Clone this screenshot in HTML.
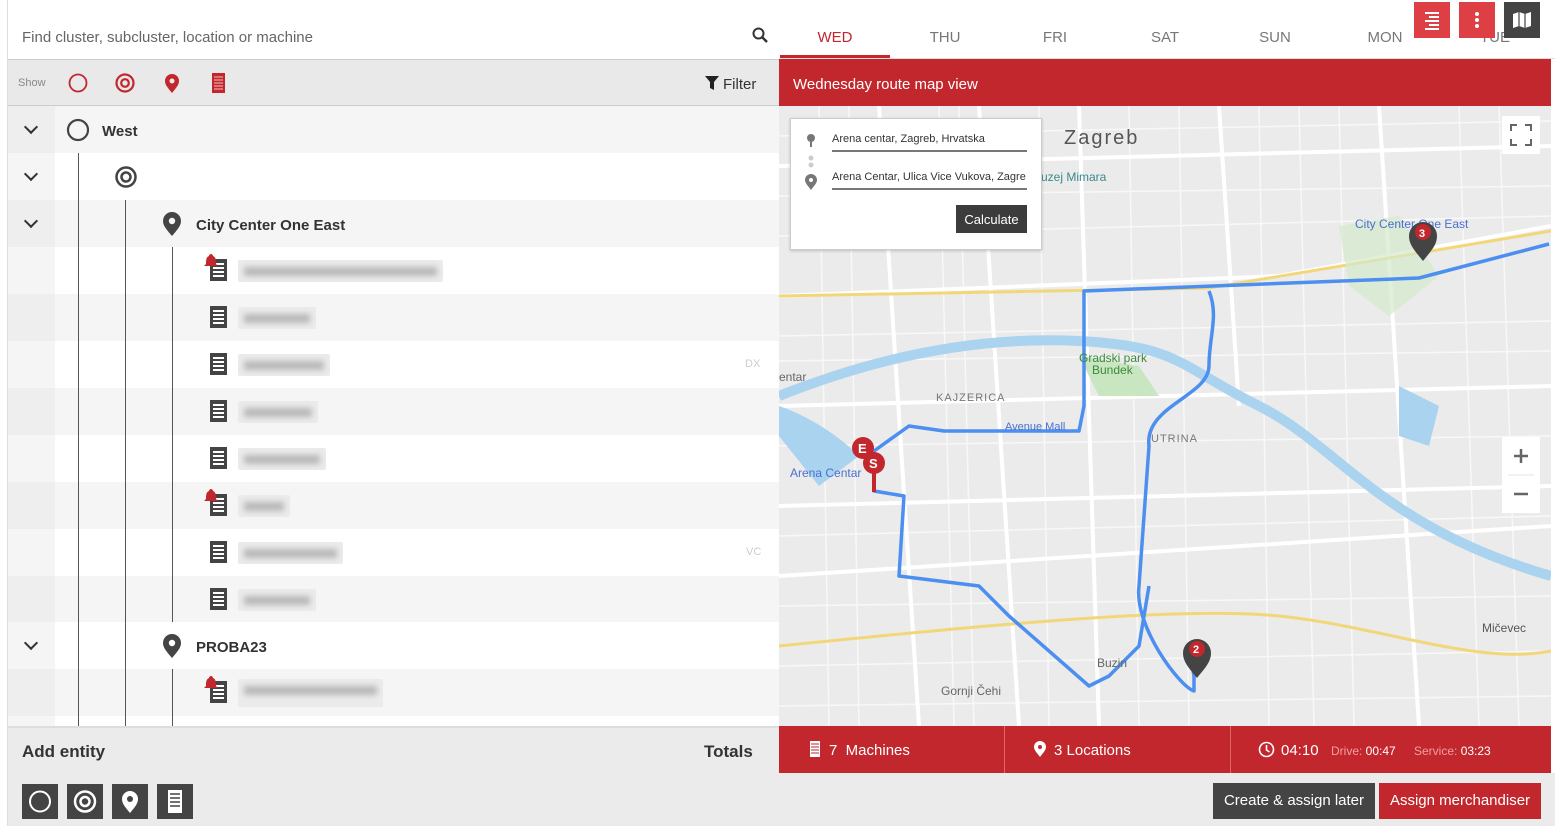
<!DOCTYPE html>
<html><head><meta charset="utf-8"><style>
*{box-sizing:border-box;margin:0;padding:0}
body{width:1555px;height:826px;overflow:hidden;background:#fff;font-family:"Liberation Sans",sans-serif;position:relative;color:#333}
.abs{position:absolute}
.left{left:7px;top:0;width:773px;height:826px;border-left:1px solid #ddd}
.row{position:absolute;left:8px;width:771px;height:47px}
.row .c1{position:absolute;left:0;top:0;width:47px;height:47px;background:#eee}
.chev{position:absolute;left:18px;top:16px;width:10px;height:10px;border-right:2.5px solid #333;border-bottom:2.5px solid #333;transform:rotate(45deg)}
.blur{position:absolute;height:22px;background:#ebebeb;border-radius:2px}
.blur:after{content:"";position:absolute;left:6px;right:6px;top:7px;height:9px;background:#b8b8b8;filter:blur(3px)}
.vl{position:absolute;width:1px;background:#555}
.mach{position:absolute;width:17px;height:22px;background:#444;border:2px solid #444}
.mach i{display:block;height:2px;background:#fff;margin:2px 1px 0}
.tab{position:absolute;top:29px;font-size:15px;color:#777;width:110px;text-align:center}
.sq{position:absolute;width:36px;height:36px}
</style></head><body>
<div class="abs left"></div>
<div class="abs" style="left:22px;top:29px;font-size:15px;color:#666">Find cluster, subcluster, location or machine</div>
<svg class="abs" style="left:752px;top:27px" width="16" height="16"><circle cx="6.5" cy="6.5" r="5" fill="none" stroke="#333" stroke-width="2"/><path d="M10 10l5 5" stroke="#333" stroke-width="2.5"/></svg>
<div class="abs" style="left:8px;top:59px;width:771px;height:47px;background:#e9e9e9;border-top:1px solid #ccc;border-bottom:1px solid #ccc"></div>
<div class="abs" style="left:18px;top:77px;font-size:11px;color:#888">Show</div>
<svg class="abs" style="left:68px;top:72px" width="170" height="22">
<circle cx="10" cy="11" r="8.5" fill="none" stroke="#c1272d" stroke-width="1.8"/>
<circle cx="57" cy="11" r="8.5" fill="none" stroke="#c1272d" stroke-width="2.2"/><circle cx="57" cy="11" r="3.8" fill="none" stroke="#c1272d" stroke-width="2.2"/>
<path d="M104 21c-4-5-7-8-7-12a7 7 0 0 1 14 0c0 4-3 7-7 12z" fill="#c1272d"/><circle cx="104" cy="9" r="2.5" fill="#e9e9e9"/>
<rect x="144" y="1" width="13" height="20" fill="#c1272d"/><path d="M146 5h9M146 8h9M146 11h9M146 14h9M146 17h9" stroke="#f4c0c0" stroke-width="1"/>
</svg>
<svg class="abs" style="left:705px;top:76px" width="14" height="14"><path d="M0 0h14l-5 6v8l-4-2v-6z" fill="#222"/></svg>
<div class="abs" style="left:723px;top:76px;font-size:15px;color:#333">Filter</div>

<div class="row" style="top:106px;background:#f5f5f5"><div class="c1"></div><div class="chev"></div>
<svg class="abs" style="left:58px;top:12px" width="24" height="24"><circle cx="12" cy="12" r="10" fill="none" stroke="#444" stroke-width="2.2"/></svg>
<div class="abs" style="left:94px;top:17px;font-weight:bold;font-size:15px">West</div></div>
<div class="row" style="top:153px;background:#fff"><div class="c1" style="background:#f5f5f5"></div><div class="chev"></div>
<svg class="abs" style="left:106px;top:12px" width="24" height="24"><circle cx="12" cy="12" r="9.5" fill="none" stroke="#444" stroke-width="2.5"/><circle cx="12" cy="12" r="4.5" fill="none" stroke="#444" stroke-width="2.5"/></svg></div>
<div class="row" style="top:200px;background:#f5f5f5"><div class="c1"></div><div class="chev"></div>
<svg class="abs" style="left:154px;top:12px" width="20" height="25"><path d="M10 24c-5-6-9-10-9-15a9 9 0 0 1 18 0c0 5-4 9-9 15z" fill="#444"/><circle cx="10" cy="9" r="3.2" fill="#f5f5f5"/></svg>
<div class="abs" style="left:188px;top:17px;font-weight:bold;font-size:15px">City Center One East</div></div>
<div class="row" style="top:247px;background:#fff"><div class="c1" style="background:#f5f5f5"></div><div class="blur" style="left:230px;top:13px;width:205px"></div></div>
<div class="row" style="top:294px;background:#f5f5f5"><div class="c1"></div><div class="blur" style="left:230px;top:13px;width:78px"></div></div>
<div class="row" style="top:341px;background:#fff"><div class="c1" style="background:#f5f5f5"></div><div class="blur" style="left:230px;top:13px;width:92px"></div><div class="abs" style="left:737px;top:17px;font-size:11px;color:#ccc">DX</div></div>
<div class="row" style="top:388px;background:#f5f5f5"><div class="c1"></div><div class="blur" style="left:230px;top:13px;width:80px"></div></div>
<div class="row" style="top:435px;background:#fff"><div class="c1" style="background:#f5f5f5"></div><div class="blur" style="left:230px;top:13px;width:88px"></div></div>
<div class="row" style="top:482px;background:#f5f5f5"><div class="c1"></div><div class="blur" style="left:230px;top:13px;width:52px"></div></div>
<div class="row" style="top:529px;background:#fff"><div class="c1" style="background:#f5f5f5"></div><div class="blur" style="left:230px;top:13px;width:105px"></div><div class="abs" style="left:738px;top:17px;font-size:11px;color:#ccc">VC</div></div>
<div class="row" style="top:576px;background:#f5f5f5"><div class="c1"></div><div class="blur" style="left:230px;top:13px;width:78px"></div></div>
<div class="row" style="top:622px;background:#fff"><div class="c1" style="background:#f5f5f5"></div><div class="chev"></div>
<svg class="abs" style="left:154px;top:12px" width="20" height="25"><path d="M10 24c-5-6-9-10-9-15a9 9 0 0 1 18 0c0 5-4 9-9 15z" fill="#444"/><circle cx="10" cy="9" r="3.2" fill="#fff"/></svg>
<div class="abs" style="left:188px;top:17px;font-weight:bold;font-size:15px">PROBA23</div></div>
<div class="row" style="top:669px;background:#f5f5f5"><div class="c1"></div><div class="blur" style="left:230px;top:10px;width:145px;height:28px"></div></div>
<div class="row" style="top:716px;height:10px;background:#fff"><div class="c1" style="background:#f5f5f5;height:10px"></div></div>

<div class="mach" style="left:210px;top:259px"><i></i><i></i><i></i><i></i></div>
<div class="mach" style="left:210px;top:306px"><i></i><i></i><i></i><i></i></div>
<div class="mach" style="left:210px;top:353px"><i></i><i></i><i></i><i></i></div>
<div class="mach" style="left:210px;top:400px"><i></i><i></i><i></i><i></i></div>
<div class="mach" style="left:210px;top:447px"><i></i><i></i><i></i><i></i></div>
<div class="mach" style="left:210px;top:494px"><i></i><i></i><i></i><i></i></div>
<div class="mach" style="left:210px;top:541px"><i></i><i></i><i></i><i></i></div>
<div class="mach" style="left:210px;top:588px"><i></i><i></i><i></i><i></i></div>
<div class="mach" style="left:210px;top:681px"><i></i><i></i><i></i><i></i></div>
<svg class="abs" style="left:203px;top:253px" width="16" height="16"><path d="M8 1c-1 0-2 1-2 2-3 1-3 5-3 8l-2 2h14l-2-2c0-3 0-7-3-8 0-1-1-2-2-2z" fill="#c1272d"/></svg>
<svg class="abs" style="left:203px;top:488px" width="16" height="16"><path d="M8 1c-1 0-2 1-2 2-3 1-3 5-3 8l-2 2h14l-2-2c0-3 0-7-3-8 0-1-1-2-2-2z" fill="#c1272d"/></svg>
<svg class="abs" style="left:203px;top:675px" width="16" height="16"><path d="M8 1c-1 0-2 1-2 2-3 1-3 5-3 8l-2 2h14l-2-2c0-3 0-7-3-8 0-1-1-2-2-2z" fill="#c1272d"/></svg>
<div class="vl" style="left:78px;top:153px;height:573px"></div>
<div class="vl" style="left:125px;top:200px;height:526px"></div>
<div class="vl" style="left:172px;top:247px;height:375px"></div>
<div class="vl" style="left:172px;top:669px;height:57px"></div>

<div class="abs" style="left:8px;top:726px;width:771px;height:100px;background:#ebebeb;border-top:2px solid #ddd"></div>
<div class="abs" style="left:22px;top:742px;font-size:17px;font-weight:bold;color:#333">Add entity</div>
<div class="abs" style="left:704px;top:742px;font-size:17px;font-weight:bold;color:#333">Totals</div>
<svg class="abs" style="left:22px;top:784px" width="172" height="36">
<rect x="0" y="0" width="36" height="35" fill="#444"/><circle cx="18" cy="17.5" r="10" fill="none" stroke="#fff" stroke-width="2"/>
<rect x="45" y="0" width="36" height="35" fill="#444"/><circle cx="63" cy="17.5" r="10" fill="none" stroke="#fff" stroke-width="2.5"/><circle cx="63" cy="17.5" r="4.5" fill="none" stroke="#fff" stroke-width="2.5"/>
<rect x="90" y="0" width="36" height="35" fill="#444"/><path d="M108 29c-4-5-8-9-8-14a8 8 0 0 1 16 0c0 5-4 9-8 14z" fill="#fff"/><circle cx="108" cy="15" r="3" fill="#444"/>
<rect x="135" y="0" width="36" height="35" fill="#444"/><rect x="146" y="6" width="14" height="23" fill="#fff"/><path d="M148 10h10M148 14h10M148 18h10M148 22h10" stroke="#444" stroke-width="1.5"/>
</svg>

<div class="abs" style="left:779px;top:0;width:776px;height:59px;border-bottom:1px solid #ddd"></div>
<div class="tab" style="left:780px;color:#c1272d">WED</div>
<div class="abs" style="left:780px;top:55px;width:110px;height:3px;background:#c1272d"></div>
<div class="tab" style="left:890px">THU</div><div class="tab" style="left:1000px">FRI</div><div class="tab" style="left:1110px">SAT</div><div class="tab" style="left:1220px">SUN</div><div class="tab" style="left:1330px">MON</div><div class="tab" style="left:1440px">TUE</div>
<div class="sq" style="left:1414px;top:2px;background:#dd3f44"><svg width="36" height="36"><path d="M11 11h14M15 15h10M11 19h14M15 23h10M11 27h14" stroke="#fff" stroke-width="2"/></svg></div>
<div class="sq" style="left:1459px;top:2px;background:#dd3f44"><svg width="36" height="36"><circle cx="18" cy="12" r="2" fill="#fff"/><circle cx="18" cy="18" r="2" fill="#fff"/><circle cx="18" cy="24" r="2" fill="#fff"/></svg></div>
<div class="sq" style="left:1504px;top:2px;background:#444"><svg width="36" height="36"><path d="M9 12l6-2 6 2 6-2v14l-6 2-6-2-6 2z" fill="#fff"/><path d="M15 10v14M21 12v14" stroke="#444" stroke-width="1.2"/></svg></div>
<div class="abs" style="left:779px;top:59px;width:772px;height:47px;background:#c1272d"></div>
<div class="abs" style="left:793px;top:76px;font-size:15px;color:#fff">Wednesday route map view</div>

<svg class="abs" style="left:779px;top:106px" width="772" height="620" viewBox="0 0 772 620">
<rect width="772" height="620" fill="#ebebeb"/>
<g stroke="#f8f8f8" stroke-width="1.5" fill="none">
<path d="M0 30L772 15M0 90L772 80M0 130L772 110M0 230L772 215M0 255L772 245M0 340L772 330M0 430L772 410M0 500L772 490M0 560L772 545M0 600L772 590"/>
<path d="M40 0L50 620M70 0L80 620M160 0L175 620M180 0L195 620M260 0L270 620M350 0L360 620M400 0L410 620M480 0L490 620M520 0L535 620M560 0L575 620M680 0L700 620M720 0L740 620"/>
</g>
<g stroke="#fff" stroke-width="4" fill="none">
<path d="M0 190L500 170L772 120"/><path d="M100 0L140 620"/><path d="M300 0L320 620"/><path d="M440 0L460 300"/><path d="M0 470L772 420"/><path d="M0 300L772 280"/><path d="M200 0L240 620"/><path d="M600 0L640 620"/><path d="M0 60L772 40"/><path d="M0 400L772 380"/>
</g>
<path d="M0 190L430 182L772 125" stroke="#f2d77a" stroke-width="3" fill="none"/>
<path d="M0 540C200 520 400 500 500 510S700 560 772 545" stroke="#f2d77a" stroke-width="3" fill="none"/>
<path d="M0 290C100 250 200 230 300 235S400 260 480 300S600 420 772 470" stroke="#aad3f0" stroke-width="10" fill="none"/>
<path d="M0 300C30 310 60 330 80 350L40 380L0 330z" fill="#aad3f0"/>
<path d="M300 250l60 10 20 30-60 0z" fill="#c8e6c0"/>
<path d="M560 120l60-10 40 60-50 40-40-30z" fill="#d4e9cc" opacity=".7"/>
<path d="M620 280l40 20-10 40-30-10z" fill="#aad3f0"/>
<path d="M95 345L130 320L165 325L300 325L305 300L305 185L640 172L770 138M430 185C440 210 430 230 430 260C430 290 365 300 370 340L360 480C355 520 400 580 415 585L415 570L410 540M370 480L360 540L330 570L310 580L230 510L200 480L120 470L125 390L95 385L95 345" stroke="#4c8ff0" stroke-width="3.5" fill="none" stroke-linejoin="round"/>
<text x="285" y="38" font-size="20" font-family="Liberation Sans" fill="#555" letter-spacing="2">Zagreb</text>
<text x="262" y="75" font-size="12" fill="#3a8a8a">uzej Mimara</text>
<text x="576" y="122" font-size="12" fill="#4a6fd0">City Center One East</text>
<text x="300" y="256" font-size="12" fill="#3a8a3a">Gradski park</text><text x="313" y="268" font-size="12" fill="#3a8a3a">Bundek</text>
<text x="157" y="295" font-size="11" fill="#777" letter-spacing="1">KAJZERICA</text>
<text x="372" y="336" font-size="11" fill="#777" letter-spacing="1">UTRINA</text>
<text x="226" y="324" font-size="11" fill="#4a6fd0">Avenue Mall</text>
<text x="11" y="371" font-size="12" fill="#4a6fd0">Arena Centar</text>
<text x="318" y="561" font-size="12" fill="#666">Buzin</text>
<text x="162" y="589" font-size="12" fill="#666">Gornji Čehi</text>
<text x="703" y="526" font-size="12" fill="#555">Mičevec</text>
<text x="0" y="275" font-size="12" fill="#666">entar</text>
<circle cx="84" cy="342" r="11" fill="#c1272d"/><text x="79" y="347" font-size="13" fill="#fff" font-weight="bold">E</text>
<circle cx="95" cy="357" r="11" fill="#c1272d"/><text x="90" y="362" font-size="13" fill="#fff" font-weight="bold">S</text>
<rect x="93" y="366" width="4" height="20" fill="#c1272d"/>
<path d="M644 155c-8-10-14-16-14-25a14 14 0 0 1 28 0c0 9-6 15-14 25z" fill="#444"/><circle cx="644" cy="126" r="8" fill="#c1272d"/><text x="640" y="131" font-size="11" fill="#fff" font-weight="bold">3</text>
<path d="M418 572c-8-10-14-16-14-25a14 14 0 0 1 28 0c0 9-6 15-14 25z" fill="#444"/><circle cx="418" cy="543" r="8" fill="#c1272d"/><text x="414" y="547" font-size="11" fill="#fff" font-weight="bold">2</text>
<rect x="723" y="10" width="38" height="38" fill="#fff"/><path d="M732 25v-6h6M746 19h6v6M752 33v6h-6M738 39h-6v-6" stroke="#666" stroke-width="2" fill="none"/>
<rect x="723" y="331" width="38" height="76" fill="#fff"/><path d="M735 350h14M742 343v14M735 388h14" stroke="#666" stroke-width="2.5"/><path d="M729 369h26" stroke="#e6e6e6"/>
</svg>
<div class="abs" style="left:790px;top:118px;width:252px;height:132px;background:#fff;border:1px solid #ccc;box-shadow:0 1px 3px rgba(0,0,0,.2)"></div>
<div class="abs" style="left:832px;top:133px;width:195px;font-size:11px;color:#333;border-bottom:2px solid #777;padding-bottom:5px">Arena centar, Zagreb, Hrvatska</div>
<div class="abs" style="left:832px;top:171px;width:195px;font-size:11px;color:#333;border-bottom:2px solid #777;padding-bottom:5px;white-space:nowrap;overflow:hidden">Arena Centar, Ulica Vice Vukova, Zagre</div>
<svg class="abs" style="left:804px;top:133px" width="14" height="58"><circle cx="7" cy="5" r="4" fill="#777"/><path d="M7 8v6" stroke="#777" stroke-width="2"/><circle cx="7" cy="25" r="2.5" fill="#ccc"/><circle cx="7" cy="32" r="2.5" fill="#ccc"/><path d="M7 57c-3-4-6-7-6-10a6 6 0 0 1 12 0c0 3-3 6-6 10z" fill="#777"/><circle cx="7" cy="47" r="2" fill="#fff"/></svg>
<div class="abs" style="left:956px;top:205px;width:71px;height:28px;background:#3c3c3c;color:#fff;font-size:13px;text-align:center;line-height:29px">Calculate</div>

<div class="abs" style="left:779px;top:726px;width:772px;height:47px;background:#c1272d"></div>
<div class="abs" style="left:1004px;top:726px;width:1px;height:47px;background:#d66"></div>
<div class="abs" style="left:1230px;top:726px;width:1px;height:47px;background:#d66"></div>
<svg class="abs" style="left:809px;top:740px" width="12" height="18"><rect x="1" y="1" width="10" height="16" fill="#fff"/><path d="M2 4h8M2 7h8M2 10h8M2 13h8" stroke="#c1272d"/></svg>
<div class="abs" style="left:829px;top:742px;font-size:15px;color:#fff">7&nbsp; Machines</div>
<svg class="abs" style="left:1034px;top:741px" width="12" height="17"><path d="M6 16c-3-4-6-7-6-10a6 6 0 0 1 12 0c0 3-3 6-6 10z" fill="#fff"/><circle cx="6" cy="6" r="2" fill="#c1272d"/></svg>
<div class="abs" style="left:1054px;top:742px;font-size:15px;color:#fff">3 Locations</div>
<svg class="abs" style="left:1258px;top:741px" width="17" height="17"><circle cx="8.5" cy="8.5" r="7" fill="none" stroke="#fff" stroke-width="1.6"/><path d="M8.5 4v5l3 2" stroke="#fff" stroke-width="1.6" fill="none"/></svg>
<div class="abs" style="left:1281px;top:742px;font-size:15px;color:#fff">04:10</div>
<div class="abs" style="left:1331px;top:744px;font-size:12px;color:#f0a0a0">Drive: <span style="color:#fff">00:47</span></div>
<div class="abs" style="left:1414px;top:744px;font-size:12px;color:#f0a0a0">Service: <span style="color:#fff">03:23</span></div>
<div class="abs" style="left:779px;top:773px;width:776px;height:53px;background:#ebebeb"></div>
<div class="abs" style="left:1213px;top:783px;width:162px;height:36px;background:#444;color:#fff;font-size:15px;text-align:center;line-height:36px">Create &amp; assign later</div>
<div class="abs" style="left:1379px;top:783px;width:162px;height:36px;background:#c1272d;color:#fff;font-size:15px;text-align:center;line-height:36px">Assign merchandiser</div>
</body></html>
